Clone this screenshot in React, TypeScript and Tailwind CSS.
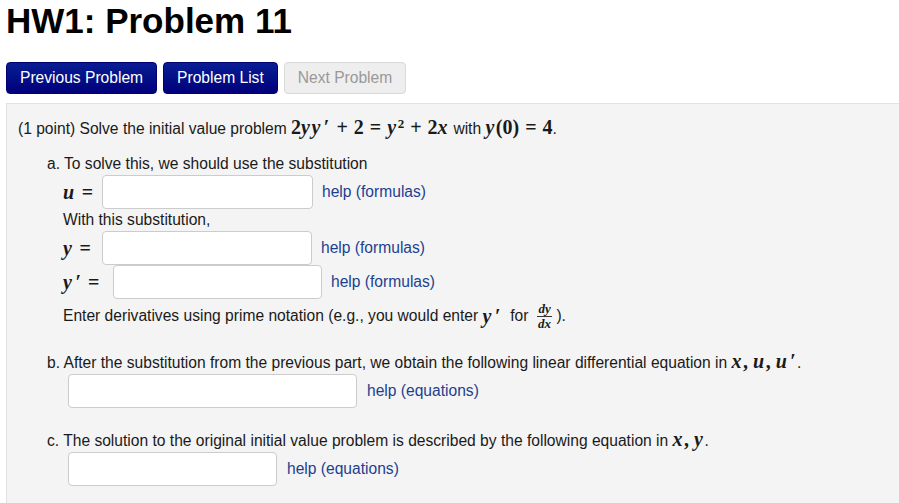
import React from 'react'

const M: React.FC<{ children: React.ReactNode; className?: string }> = ({ children, className = '' }) => (
  <span className={`font-['Liberation_Serif',serif] font-bold text-[20px] leading-none ${className}`}>{children}</span>
)

const I: React.FC<{ children: React.ReactNode }> = ({ children }) => (
  <i className="tracking-[1.5px]">{children}</i>
)

const Op: React.FC<{ children: React.ReactNode }> = ({ children }) => (
  <span className="mx-[6px]">{children}</span>
)

const Eq = () => <span className="ml-[6px]">=</span>

const Prime = () => <span className="ml-[2px] mr-[1px]">′</span>

const Help: React.FC<{ label: string }> = ({ label }) => (
  <span className="text-[#1d3f8f]">help ({label})</span>
)

const Field: React.FC<{ w: number }> = ({ w }) => (
  <input
    className="h-[34px] bg-white border border-[#ccc] rounded-[4px] outline-none"
    style={{ width: w }}
  />
)

export default function App() {
  return (
    <div className="w-[899px] h-[503px] overflow-hidden bg-white font-['Liberation_Sans',Arial,sans-serif] text-[#1a1a1a]">
      <h1 className="pl-[6px] pt-[1px] text-[35px] leading-[40px] font-bold text-black">HW1: Problem 11</h1>

      <div className="flex gap-[6px] pl-[6px] mt-[21px]">
        <button className="h-[32px] px-[13px] rounded-[4px] border border-[#000070] bg-gradient-to-b from-[#0a1c94] to-[#00007a] text-white text-[15.6px]">
          Previous Problem
        </button>
        <button className="h-[32px] px-[13px] rounded-[4px] border border-[#000070] bg-gradient-to-b from-[#0a1c94] to-[#00007a] text-white text-[15.6px]">
          Problem List
        </button>
        <button className="h-[32px] px-[13px] rounded-[4px] border border-[#d9d9d9] bg-[#eeeeee] text-[#999] text-[15.6px]">
          Next Problem
        </button>
      </div>

      <div className="ml-[6px] mt-[9px] h-[420px] bg-[#f4f4f4] border-t border-l border-[#e2e2e2] pl-[11px] pt-[12px] text-[15.6px]">
        <p className="leading-[26px]">
          (1 point) Solve the initial value problem{' '}
          <M>
            2<I>yy</I>
            <Prime />
            <Op>+</Op>2<Op>=</Op>
            <I>y</I>
            <sup className="text-[13px]">2</sup>
            <Op>+</Op>2<I>x</I>
          </M>{' '}
          with{' '}
          <M>
            <I>y</I>(0)<Op>=</Op>4
          </M>
          .
        </p>

        <div className="pl-[29px] mt-[11px]">
          <p className="leading-[22px]">a. To solve this, we should use the substitution</p>
          <div className="pl-[16px]">
            <div className="flex items-center h-[34px]">
              <M className="w-[39px]">
                <I>u</I>
                <Eq />
              </M>
              <Field w={211} />
              <span className="ml-[9px]">
                <Help label="formulas" />
              </span>
            </div>
            <p className="leading-[22px]">With this substitution,</p>
            <div className="flex items-center h-[34px]">
              <M className="w-[39px]">
                <I>y</I>
                <Eq />
              </M>
              <Field w={210} />
              <span className="ml-[9px]">
                <Help label="formulas" />
              </span>
            </div>
            <div className="flex items-center h-[34px]">
              <M className="w-[50px]">
                <I>y</I>
                <Prime />
                <Eq />
              </M>
              <Field w={209} />
              <span className="ml-[9px]">
                <Help label="formulas" />
              </span>
            </div>
            <div className="flex items-center h-[26px] mt-[4px]">
              <span>Enter derivatives using prime notation (e.g., you would enter&nbsp;</span>
              <M>
                <I>y</I>
                <Prime />
              </M>
              <span>&nbsp; for&nbsp;&nbsp;</span>
              <span className="inline-flex flex-col items-center font-['Liberation_Serif',serif] font-bold italic text-[13px] leading-[12px]">
                <span className="pb-[1px]">dy</span>
                <span className="border-t border-[#333] px-[1px] pt-[1px]">dx</span>
              </span>
              <span>&nbsp;).</span>
            </div>
          </div>

          <p className="leading-[22px] mt-[22px]">
            b. After the substitution from the previous part, we obtain the following linear differential equation in{' '}
            <M>
              <I>x</I>, <I>u</I>, <I>u</I>
              <Prime />
            </M>
            .
          </p>
          <div className="flex items-center h-[34px] pl-[21px]">
            <Field w={289} />
            <span className="ml-[10px]">
              <Help label="equations" />
            </span>
          </div>

          <p className="leading-[22px] mt-[21px]">
            c. The solution to the original initial value problem is described by the following equation in{' '}
            <M>
              <I>x</I>, <I>y</I>
            </M>
            .
          </p>
          <div className="flex items-center h-[34px] pl-[21px]">
            <Field w={209} />
            <span className="ml-[10px]">
              <Help label="equations" />
            </span>
          </div>
        </div>
      </div>
    </div>
  )
}
